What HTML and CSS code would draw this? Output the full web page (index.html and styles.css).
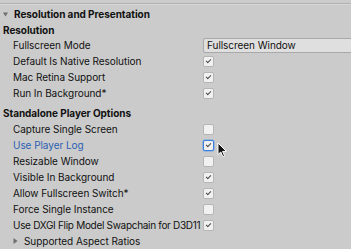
FILE: index.html
```html
<!DOCTYPE html>
<html lang="en">
<head>
  <meta charset="UTF-8">
  <meta name="viewport" content="width=device-width, initial-scale=1.0">
  <title>Player Settings - Resolution and Presentation</title>
  <link rel="stylesheet" href="styles.css">
</head>
<body>
  <div class="inspector">
    <div class="divider"></div>

    <!-- Foldout -->
    <div class="foldout">
      <svg class="arrow" width="5" height="5" viewBox="0 0 5 5"><polygon points="0,0.5 5,0.5 2.5,4.5" /></svg>
      <span>Resolution and Presentation</span>
    </div>

    <!-- Resolution -->
    <div class="group-title">Resolution</div>
    <div class="row">
      <span class="label">Fullscreen Mode</span>
      <div class="dropdown">Fullscreen Window</div>
    </div>
    <div class="row">
      <span class="label">Default Is Native Resolution</span>
      <span class="check on"></span>
    </div>
    <div class="row">
      <span class="label">Mac Retina Support</span>
      <span class="check on"></span>
    </div>
    <div class="row">
      <span class="label">Run In Background*</span>
      <span class="check on"></span>
    </div>

    <!-- Standalone Player Options -->
    <div class="group-title spaced">Standalone Player Options</div>
    <div class="row">
      <span class="label">Capture Single Screen</span>
      <span class="check"></span>
    </div>
    <div class="row">
      <span class="label hover">Use Player Log</span>
      <span class="check on focus"></span>
    </div>
    <div class="row">
      <span class="label">Resizable Window</span>
      <span class="check"></span>
    </div>
    <div class="row">
      <span class="label">Visible In Background</span>
      <span class="check on"></span>
    </div>
    <div class="row">
      <span class="label">Allow Fullscreen Switch*</span>
      <span class="check on"></span>
    </div>
    <div class="row">
      <span class="label">Force Single Instance</span>
      <span class="check"></span>
    </div>
    <div class="row">
      <span class="label long">Use DXGI Flip Model Swapchain for D3D11</span>
      <span class="check on"></span>
    </div>
    <div class="row sub">
      <svg class="arrow" width="5" height="6" viewBox="0 0 5 6"><polygon points="0.5,0 4.5,3 0.5,6" /></svg>
      <span>Supported Aspect Ratios</span>
    </div>

    <!-- Mouse pointer -->
    <svg class="cursor" width="11" height="16" viewBox="0 0 11 16">
      <path d="M1 1 L1 12.5 L3.8 10 L5.8 14.6 L7.6 13.8 L5.6 9.4 L9.4 9.4 Z" fill="#111" stroke="#fff" stroke-width="1" stroke-linejoin="round" />
    </svg>
  </div>
</body>
</html>
```

FILE: styles.css
```css
body {
  margin: 0;
  padding: 0;
  background: #cbcbcb;
  font-family: Inter, "Noto Sans", sans-serif;
  font-size: 10px;
  letter-spacing: -0.05px;
  color: #111;
}

.inspector {
  position: relative;
  width: 351px;
  height: 249px;
  overflow: hidden;
  padding-top: 3px;
  box-sizing: border-box;
}

.divider {
  height: 1px;
  background: #b2b2b2;
  border-bottom: 1px solid #d6d6d6;
}

.foldout {
  display: flex;
  align-items: center;
  height: 18px;
  padding-left: 3px;
  font-weight: 700;
}

.foldout .arrow {
  fill: #6e6e6e;
  margin-right: 6px;
}

.group-title {
  display: flex;
  align-items: center;
  height: 14px;
  padding-left: 3px;
  font-weight: 700;
}

.group-title.spaced {
  margin-top: 4px;
  height: 16px;
}

.row {
  display: flex;
  align-items: center;
  height: 16px;
  padding-left: 13px;
}

.label {
  flex: 0 0 auto;
  min-width: 190px;
  white-space: nowrap;
}

.label.long {
  letter-spacing: -0.3px;
}

.label.hover {
  color: #2c5fb3;
}

.dropdown {
  flex: 1;
  height: 13px;
  line-height: 13px;
  padding-left: 3px;
  margin-right: -6px;
  background: #dfdfdf;
  border: 1px solid #a9a9a9;
  border-radius: 2px;
  color: #111;
}

.check {
  position: relative;
  width: 9px;
  height: 9px;
  background: #f1f1f1;
  border: 1px solid #b5b5b5;
  border-radius: 2px;
}

.check.on::after {
  content: "";
  position: absolute;
  left: 2px;
  top: 2px;
  width: 4px;
  height: 2px;
  border-left: 1px solid #4a4a4a;
  border-bottom: 1px solid #4a4a4a;
  transform: rotate(-45deg);
}

.check.focus {
  border-color: #3d7fd9;
  box-shadow: 0 0 0 0.5px #6ea2e8;
}

.row.sub .arrow {
  fill: #6e6e6e;
  margin-right: 6px;
}

.cursor {
  position: absolute;
  left: 217px;
  top: 142px;
}
```
